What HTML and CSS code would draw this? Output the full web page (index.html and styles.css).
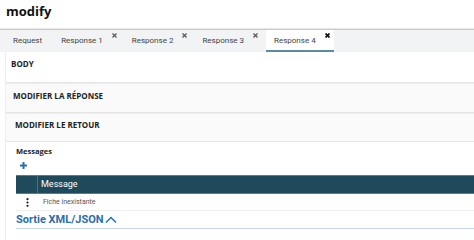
FILE: index.html
```html
<!DOCTYPE html>
<html lang="fr">
<head>
    <meta charset="UTF-8">
    <title>modify</title>
    <link rel="stylesheet" href="styles.css">
</head>
<body>
    <div class="pageTitle">modify</div>

    <div class="tabBar">
        <div class="tab tabFirst">Request</div>
        <div class="tab">Response 1<svg class="tabClose" width="5" height="5" viewBox="0 0 5 5"><path d="M0.5 0.5l4 4M4.5 0.5l-4 4"/></svg></div>
        <div class="tab">Response 2<svg class="tabClose" width="5" height="5" viewBox="0 0 5 5"><path d="M0.5 0.5l4 4M4.5 0.5l-4 4"/></svg></div>
        <div class="tab">Response 3<svg class="tabClose" width="5" height="5" viewBox="0 0 5 5"><path d="M0.5 0.5l4 4M4.5 0.5l-4 4"/></svg></div>
        <div class="tab tabActive">Response 4<svg class="tabClose" width="5" height="5" viewBox="0 0 5 5"><path d="M0.5 0.5l4 4M4.5 0.5l-4 4"/></svg></div>
    </div>

    <div class="content">
        <div class="section sectionBody">BODY</div>
        <div class="section sectionGrey sectionLevel1">MODIFIER LA RÉPONSE</div>
        <div class="section sectionGrey sectionLevel2">MODIFIER LE RETOUR</div>

        <div class="messages">
            <div class="messagesTitle">Messages</div>
            <div class="addBtn">
                <svg width="7" height="7" viewBox="0 0 7 7"><path d="M3.5 0v7M0 3.5h7" stroke="#2a6db3" stroke-width="2"/></svg>
            </div>
            <div class="grid">
                <div class="gridHead">
                    <div class="gridCellAction"></div>
                    <div class="gridCellText">Message</div>
                </div>
                <div class="gridRow">
                    <div class="gridCellAction">
                        <svg width="3" height="9" viewBox="0 0 3 9"><circle cx="1.5" cy="1.2" r="1.1"/><circle cx="1.5" cy="4.5" r="1.1"/><circle cx="1.5" cy="7.8" r="1.1"/></svg>
                    </div>
                    <div class="gridCellText">Fiche inexistante</div>
                </div>
            </div>
            <div class="outputTitle">Sortie XML/JSON<svg width="12" height="8" viewBox="0 0 12 8"><path d="M1 6.5l5-5 5 5" fill="none" stroke="#2a6db3" stroke-width="1.5"/></svg></div>
            <div class="outputBox"></div>
        </div>
    </div>
</body>
</html>
```

FILE: styles.css
```css
*{
    margin:0;
    padding:0;
    box-sizing:border-box;
}

body{
    font-family:"Open Sans", "Liberation Sans", sans-serif;
    color:#222;
    background:#fff;
    width:474px;
    height:240px;
    overflow:hidden;
}

.pageTitle{
    font-size:13px;
    font-weight:700;
    padding:2px 0 0 6px;
    height:29px;
    color:#111;
}

.tabBar{
    display:flex;
    height:23px;
    background:#f1f3f4;
    border-top:1px solid #c9c9c9;
    box-shadow:0 -1px 1px rgba(0,0,0,0.08);
    padding-left:5px;
}

.tab{
    display:flex;
    font-family:Roboto, sans-serif;
    font-size:8px;
    color:#444;
    line-height:22px;
    padding:0 7px 0 8px;
}

.tabFirst{
    padding-right:11px;
}

.tabClose{
    margin:3px 0 0 9px;
    fill:none;
    stroke:#555;
    stroke-width:1.2;
}

.tabActive{
    background:#fff;
    padding:0 4px 0 8px;
    margin-left:1px;
    border-bottom:2px solid #5b8ba8;
    line-height:21px;
}

.tabActive .tabClose{
    stroke:#111;
    stroke-width:1.7;
}

.content{
    margin-left:5px;
    border-left:1px solid #eee;
}

.section{
    font-size:8px;
    font-weight:700;
    color:#222;
    height:31px;
    border-bottom:1px solid #e6e6e6;
}

.sectionBody{
    padding:6px 0 0 5px;
}

.sectionGrey{
    background:#fafafa;
    padding:6px 0 0 7px;
    height:30px;
    border-top:1px solid #ececec;
}

.sectionLevel2{
    padding:5px 0 0 9px;
    height:29px;
}

.messages{
    padding:4px 0 0 10px;
}

.messagesTitle{
    font-size:7.5px;
    font-weight:700;
    color:#222;
    height:13px;
    line-height:11px;
}

.addBtn{
    height:13px;
}

.addBtn svg{
    display:block;
    margin:3px 0 0 4px;
}

.grid{
    font-family:Roboto, sans-serif;
}

.gridHead{
    display:flex;
    height:19px;
    background:#1f4a5c;
    color:#fff;
    font-size:9px;
    border-top:1px solid #5d7c88;
    border-bottom:1px solid #5d7c88;
}

.gridHead .gridCellAction{
    border-right:1px solid #4f6d7a;
}

.gridCellAction{
    width:22px;
    display:flex;
    justify-content:center;
    align-items:center;
}

.gridCellText{
    padding-left:3px;
    line-height:17px;
}

.gridRow{
    display:flex;
    height:17px;
    border-bottom:1px solid #eeeeee;
    color:#555;
}

.gridRow .gridCellAction svg{
    fill:#222;
}

.gridRow .gridCellText{
    padding-left:5px;
    line-height:16px;
    font-size:7px;
}

.outputTitle{
    display:flex;
    align-items:center;
    gap:1px;
    font-family:Roboto, sans-serif;
    font-size:11px;
    font-weight:700;
    color:#2a6db3;
    height:17px;
}

.outputBox{
    border-top:1px solid #c5d6e6;
    height:20px;
}
```
